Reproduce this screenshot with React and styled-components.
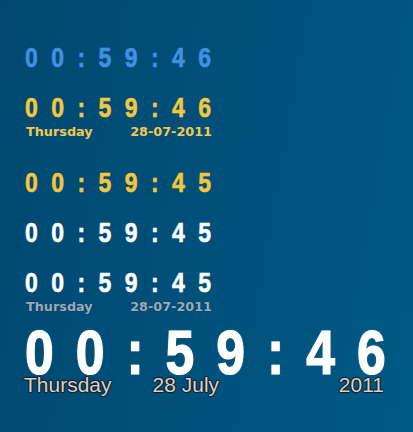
import React from "react";
import styled, { createGlobalStyle } from "styled-components";

const Global = createGlobalStyle`
  html, body { margin: 0; padding: 0; overflow: hidden; }
  body {
    width: 413px;
    height: 432px;
    background: linear-gradient(100deg, #004870 0%, #00517b 55%, #005a84 100%);
  }
`;

const Page = styled.div`
  width: 413px;
  height: 432px;
  box-sizing: border-box;
  overflow: hidden;
  padding: 44px 0 0 25px;
  display: flex;
  flex-direction: column;
  align-items: stretch;
`;

const Widget = styled.div`
  display: flex;
  flex-direction: column;
  align-items: flex-start;
  min-width: 0;
  margin-top: ${(p) => p.$gap || 0}px;
`;

const Clock = styled.div`
  flex: none;
  white-space: nowrap;
  font-family: "Liberation Sans", Arial, sans-serif;
  font-weight: 700;
  font-size: ${(p) => (p.$big ? 63 : 28)}px;
  line-height: ${(p) => (p.$big ? 46 : 28)}px;
  letter-spacing: ${(p) => (p.$big ? 26.8 : 16.4)}px;
  color: ${(p) => p.$color};
  -webkit-text-stroke: ${(p) => (p.$big ? 1.2 : 0.6)}px ${(p) => p.$color};
  transform: scaleX(0.82);
  transform-origin: left center;
  text-shadow: ${(p) =>
    p.$big
      ? "0 0 2px rgba(255,255,255,0.55), 1px 1px 1px rgba(0,30,50,0.45)"
      : "none"};
`;

const DateRow = styled.div`
  align-self: stretch;
  width: 186px;
  margin: 3px 0 0 1px;
  display: flex;
  justify-content: space-between;
  font-family: "DejaVu Sans", Verdana, sans-serif;
  font-weight: 700;
  font-size: 12.8px;
  line-height: 14px;
  color: ${(p) => p.$color};
  white-space: nowrap;
  text-shadow: ${(p) => (p.$shade ? "0 0 1px rgba(0,20,40,0.6)" : "none")};
`;

const BigDateRow = styled.div`
  width: 360px;
  margin-left: -1px;
  display: flex;
  font-family: "Liberation Sans", Arial, sans-serif;
  font-size: 21px;
  line-height: 19px;
  color: #d2d2d2;
  white-space: nowrap;
  text-shadow: -1px 0 1px #1c1c1c, 1px 0 1px #1c1c1c, 0 -1px 1px #1c1c1c,
    0 1px 1px #1c1c1c;
`;

const Part = styled.span`
  margin-left: ${(p) => (p.$auto ? "auto" : `${p.$ml || 0}px`)};
`;

const BLUE = "#4290e2";
const YELLOW = "#f5c73e";
const WHITE = "#ffffff";

export default function App() {
  return (
    <>
      <Global />
      <Page>
        <Widget>
          <Clock $color={BLUE}>00:59:46</Clock>
        </Widget>
        <Widget $gap={22}>
          <Clock $color={YELLOW}>00:59:46</Clock>
          <DateRow $color="#f2c94e">
            <span>Thursday</span>
            <span>28-07-2011</span>
          </DateRow>
        </Widget>
        <Widget $gap={29.5}>
          <Clock $color={YELLOW}>00:59:45</Clock>
        </Widget>
        <Widget $gap={22}>
          <Clock $color={WHITE}>00:59:45</Clock>
        </Widget>
        <Widget $gap={22}>
          <Clock $color={WHITE}>00:59:45</Clock>
          <DateRow $color="#9dabb8" $shade>
            <span>Thursday</span>
            <span>28-07-2011</span>
          </DateRow>
        </Widget>
        <Widget $gap={15.4}>
          <Clock $big $color={WHITE}>00:59:46</Clock>
          <BigDateRow>
            <Part>Thursday</Part>
            <Part $ml={41}>28 July</Part>
            <Part $auto>2011</Part>
          </BigDateRow>
        </Widget>
      </Page>
    </>
  );
}
